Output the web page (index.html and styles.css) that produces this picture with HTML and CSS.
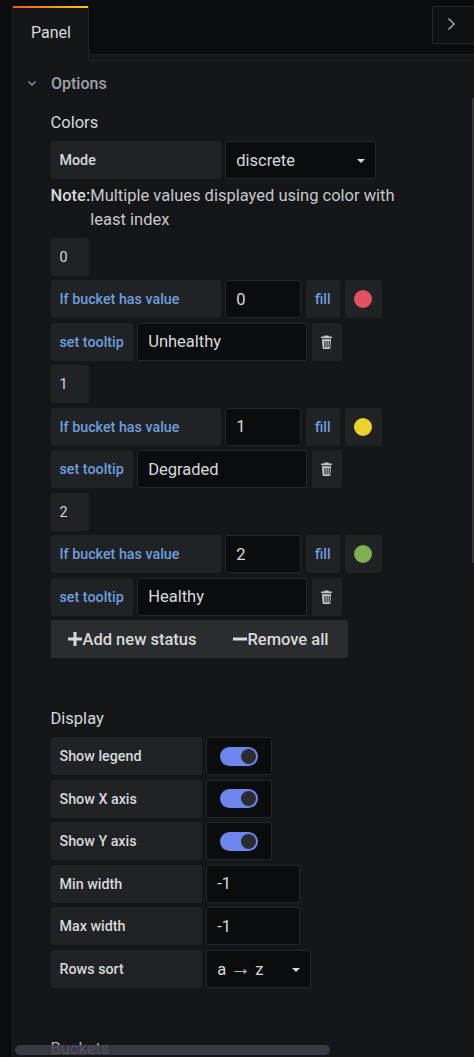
FILE: index.html
```html
<!DOCTYPE html>
<html lang="en">
<head>
  <meta charset="UTF-8">
  <meta name="viewport" content="width=device-width, initial-scale=1.0">
  <title>Panel options</title>
  <link rel="stylesheet" href="styles.css">
</head>
<body>

<div class="panel">
  <!-- Tabs -->
  <div class="tabs">
    <div class="tab">Panel</div>
    <button class="collapse">
      <svg width="16" height="16" viewBox="0 0 16 16"><path d="M5.500 2.500 11 8 5.500 13.500" fill="none" stroke="#9a9b9f" stroke-width="1.7"/></svg>
    </button>
  </div>

  <div class="content">
    <!-- Options header -->
    <div class="options-head">
      <svg class="chevron" width="14" height="14" viewBox="0 0 14 14"><path d="M3.500 5.500 7 9 10.500 5.500" fill="none" stroke="#8e9096" stroke-width="1.500"/></svg>
      <span>Options</span>
    </div>

    <div class="options-body">
      <!-- Colors -->
      <h5>Colors</h5>
      <div class="row">
        <div class="label w-170">Mode</div>
        <div class="select w-151"><span>discrete</span><i class="caret"></i></div>
      </div>
      <div class="note">
        <b>Note:</b>
        <span>Multiple values displayed using color with least index</span>
      </div>

      <div class="row"><div class="label w-38 plain">0</div></div>
      <div class="row">
        <div class="label w-170 blue">If bucket has value</div>
        <div class="input w-76">0</div>
        <div class="label w-34 blue">fill</div>
        <div class="label swatch-box"><i class="swatch red"></i></div>
      </div>
      <div class="row">
        <div class="label w-82 blue">set tooltip</div>
        <div class="input w-170">Unhealthy</div>
        <div class="label trash-box">
          <svg width="13" height="14" viewBox="0 0 12 13"><path d="M4.300 0.500h3.400l.6 1H11v1.600H1V1.500h2.700zM1.800 4h8.400l-.6 8.100a.9.900 0 0 1-.9.900H3.300a.9.900 0 0 1-.9-.9zM4 5.500v6h1v-6zm2 0v6h1v-6zm2 0v6h1v-6z" fill="#c7c8ca" fill-rule="evenodd"/></svg>
        </div>
      </div>

      <div class="row"><div class="label w-38 plain">1</div></div>
      <div class="row">
        <div class="label w-170 blue">If bucket has value</div>
        <div class="input w-76">1</div>
        <div class="label w-34 blue">fill</div>
        <div class="label swatch-box"><i class="swatch yellow"></i></div>
      </div>
      <div class="row">
        <div class="label w-82 blue">set tooltip</div>
        <div class="input w-170">Degraded</div>
        <div class="label trash-box">
          <svg width="13" height="14" viewBox="0 0 12 13"><path d="M4.300 0.500h3.400l.6 1H11v1.600H1V1.500h2.700zM1.800 4h8.400l-.6 8.100a.9.900 0 0 1-.9.900H3.300a.9.900 0 0 1-.9-.9zM4 5.500v6h1v-6zm2 0v6h1v-6zm2 0v6h1v-6z" fill="#c7c8ca" fill-rule="evenodd"/></svg>
        </div>
      </div>

      <div class="row"><div class="label w-38 plain">2</div></div>
      <div class="row">
        <div class="label w-170 blue">If bucket has value</div>
        <div class="input w-76">2</div>
        <div class="label w-34 blue">fill</div>
        <div class="label swatch-box"><i class="swatch green"></i></div>
      </div>
      <div class="row">
        <div class="label w-82 blue">set tooltip</div>
        <div class="input w-170">Healthy</div>
        <div class="label trash-box">
          <svg width="13" height="14" viewBox="0 0 12 13"><path d="M4.300 0.500h3.400l.6 1H11v1.600H1V1.500h2.700zM1.800 4h8.400l-.6 8.100a.9.900 0 0 1-.9.900H3.300a.9.900 0 0 1-.9-.9zM4 5.500v6h1v-6zm2 0v6h1v-6zm2 0v6h1v-6z" fill="#c7c8ca" fill-rule="evenodd"/></svg>
        </div>
      </div>

      <div class="btn-row">
        <button class="btn add">
          <svg width="14" height="14" viewBox="0 0 14 14"><path d="M5.500 0h3v5.500H14v3H8.500V14h-3V8.500H0v-3h5.500z" fill="#d8d9da"/></svg>Add new status
        </button>
        <button class="btn remove">
          <svg width="14" height="14" viewBox="0 0 14 14"><path d="M0 5.500h14v3H0z" fill="#d8d9da"/></svg>Remove all
        </button>
      </div>

      <!-- Display -->
      <h5 class="display-title">Display</h5>
      <div class="row">
        <div class="label w-151">Show legend</div>
        <div class="switch-box"><span class="switch"><i></i></span></div>
      </div>
      <div class="row">
        <div class="label w-151">Show X axis</div>
        <div class="switch-box"><span class="switch"><i></i></span></div>
      </div>
      <div class="row">
        <div class="label w-151">Show Y axis</div>
        <div class="switch-box"><span class="switch"><i></i></span></div>
      </div>
      <div class="row">
        <div class="label w-151">Min width</div>
        <div class="input w-94">-1</div>
      </div>
      <div class="row">
        <div class="label w-151">Max width</div>
        <div class="input w-94">-1</div>
      </div>
      <div class="row">
        <div class="label w-151">Rows sort</div>
        <div class="select w-105"><span class="sort-value">a <span class="arrow">→</span> z</span><i class="caret"></i></div>
      </div>

      <!-- Buckets -->
      <h5 class="buckets-title">Buckets</h5>
    </div>
  </div>

  <!-- Scrollbars -->
  <div class="scroll-x"></div>
  <div class="scroll-y"></div>
</div>

</body>
</html>
```

FILE: styles.css
```css
/* Basic Styles */
html, body {
  margin: 0;
  padding: 0;
  height: 100%;
  overflow: hidden;
}
body {
  font-family: Roboto, "Liberation Sans", sans-serif;
  background-color: #0b0c0e;
  color: #d8d9da;
}
.panel {
  position: relative;
  height: 1057px;
  margin-left: 12px;
  overflow: hidden;
}

/* Tabs */
.tabs {
  display: flex;
  justify-content: space-between;
  height: 54px;
  box-sizing: border-box;
  padding-top: 6px;
  background-color: #0b0c0e;
}
.tab {
  position: relative;
  z-index: 1;
  width: 77px;
  height: 55px;
  box-sizing: border-box;
  padding-top: 15px;
  padding-left: 18px;
  font-size: 16px;
  line-height: 24px;
  background-color: #141619;
  background-image: linear-gradient(90deg, #f05a28, #fbca0a);
  background-size: 100% 2px;
  background-repeat: no-repeat;
  border-left: 1px solid #202226;
  border-right: 1px solid #202226;
}
.collapse {
  width: 42px;
  height: 38px;
  padding: 0 0 0 10px;
  text-align: left;
  background-color: #0f1013;
  border: 1px solid #24262b;
  border-right: none;
  border-radius: 2px 0 0 2px;
}
.content {
  height: 1003px;
  box-sizing: border-box;
  padding-top: 5px;
  background-color: #141619;
  border-top: 1px solid #202226;
  border-left: 1px solid #202226;
}

/* Options */
.options-head {
  display: flex;
  align-items: center;
  height: 24px;
  padding-top: 10px;
  padding-left: 12px;
  font-size: 16px;
  font-weight: 500;
  color: #9fa1a6;
  border-top: 1px solid #1c1e22;
}
.chevron {
  margin-right: 12px;
}
.options-body {
  padding-left: 37.500px;
}
h5 {
  margin: 16px 0 6px;
  font-size: 16.500px;
  font-weight: 400;
  line-height: 24px;
  color: #d8d9da;
}

/* Form rows */
.row {
  display: flex;
  gap: 4.700px;
  margin-bottom: 4.500px;
}
.label {
  display: flex;
  align-items: center;
  height: 38px;
  box-sizing: border-box;
  padding-left: 9px;
  font-size: 14.300px;
  font-weight: 500;
  color: #d8d9da;
  background-color: #202226;
  border-radius: 2px;
}
.blue {
  color: #6e9fdc;
}
.plain {
  font-weight: 400;
}
.input,
.select {
  display: flex;
  align-items: center;
  height: 38px;
  box-sizing: border-box;
  padding-left: 10px;
  font-size: 16.500px;
  color: #d8d9da;
  background-color: #0b0c0e;
  border: 1px solid #24262b;
  border-radius: 2px;
}
.select {
  justify-content: space-between;
  padding-right: 10px;
}
.sort-value {
  line-height: 20px;
}
.arrow {
  font-family: "Liberation Sans", sans-serif;
  font-size: 21px;
  line-height: 1;
  color: #b5b6b9;
}
.caret {
  width: 0;
  height: 0;
  margin-top: 2px;
  border-left: 4px solid transparent;
  border-right: 4px solid transparent;
  border-top: 4px solid #d8d9da;
}
.w-38 { width: 38px; }
.w-34 { width: 34px; }
.w-76 { width: 76px; }
.w-82 { width: 82px; }
.w-94 { width: 94px; }
.w-105 { width: 105px; }
.w-151 { width: 151px; }
.w-170 { width: 170px; }

.note {
  display: flex;
  width: 350px;
  margin: 1px 0 5px;
  font-size: 16.500px;
  line-height: 24.500px;
  color: #c7c8ca;
}
.note b {
  font-weight: 500;
  color: #d8d9da;
}
.swatch-box {
  justify-content: center;
  width: 37px;
  padding-left: 0;
}
.swatch {
  width: 18px;
  height: 18px;
  border-radius: 50%;
}
.red { background-color: #e0525f; }
.yellow { background-color: #ecd22e; }
.green { background-color: #7fb04f; }
.trash-box {
  justify-content: center;
  width: 30px;
  padding-left: 0;
}

/* Buttons */
.btn-row {
  display: flex;
}
.btn {
  display: flex;
  align-items: center;
  justify-content: center;
  height: 38px;
  padding: 0;
  font-family: inherit;
  font-size: 16.500px;
  font-weight: 500;
  color: #d8d9da;
  background-color: #2a2c30;
  border: none;
}
.add {
  width: 164px;
  border-radius: 2px 0 0 2px;
}
.remove {
  width: 133px;
  border-radius: 0 2px 2px 0;
}

/* Display */
.display-title {
  margin-top: 49px;
  margin-bottom: 6px;
}
.switch-box {
  display: flex;
  align-items: center;
  justify-content: center;
  width: 66px;
  height: 38px;
  box-sizing: border-box;
  background-color: #0b0c0e;
  border: 1px solid #24262b;
  border-radius: 2px;
}
.switch {
  display: flex;
  align-items: center;
  justify-content: flex-end;
  width: 38px;
  height: 19px;
  padding-right: 2px;
  box-sizing: border-box;
  background-color: #6e85ee;
  border-radius: 10px;
}
.switch i {
  width: 15px;
  height: 15px;
  background-color: #2b2c30;
  border-radius: 50%;
}
.buckets-title {
  margin-top: 49px;
  color: #aeb0b3;
}

/* Scrollbars */
.scroll-x {
  position: absolute;
  left: 3px;
  top: 1045px;
  width: 315px;
  height: 10px;
  background-color: rgba(64, 66, 76, 0.85);
  border-radius: 5px;
}
.scroll-y {
  position: absolute;
  right: 0;
  top: 98px;
  width: 2.500px;
  height: 465px;
  background-color: #33353a;
}
```
